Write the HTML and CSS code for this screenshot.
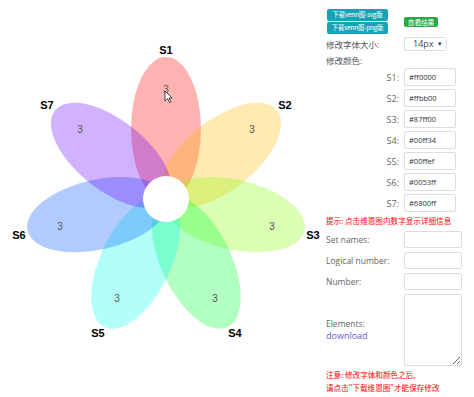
FILE: index.html
```html
<!DOCTYPE html>
<html lang="zh-CN">
<head>
  <meta charset="UTF-8" />
  <title>Venn</title>
  <link rel="stylesheet" href="styles.css">
</head>
<body>
  <div class="page">
    <!-- flower venn -->
    <svg class="venn" width="322" height="397" viewBox="0 0 322 397">
      <g class="petals">
        <ellipse cx="166" cy="129" rx="35" ry="72" fill="#ff0000" />
        <ellipse cx="166" cy="129" rx="35" ry="72" fill="#ffbb00" transform="rotate(51.43 166 199)" />
        <ellipse cx="166" cy="129" rx="35" ry="72" fill="#87ff00" transform="rotate(102.86 166 199)" />
        <ellipse cx="166" cy="129" rx="35" ry="72" fill="#00ff34" transform="rotate(154.29 166 199)" />
        <ellipse cx="166" cy="129" rx="35" ry="72" fill="#00ffef" transform="rotate(205.71 166 199)" />
        <ellipse cx="166" cy="129" rx="35" ry="72" fill="#0053ff" transform="rotate(257.14 166 199)" />
        <ellipse cx="166" cy="129" rx="35" ry="72" fill="#6800ff" transform="rotate(308.57 166 199)" />
      </g>
      <circle cx="166" cy="199" r="23" fill="#fff" />
      <g class="nums">
        <text x="166" y="93">3</text>
        <text x="252" y="133">3</text>
        <text x="272" y="230">3</text>
        <text x="215" y="302">3</text>
        <text x="117" y="302">3</text>
        <text x="60" y="230">3</text>
        <text x="80" y="133">3</text>
      </g>
      <g class="names">
        <text x="166" y="54">S1</text>
        <text x="285" y="109">S2</text>
        <text x="313" y="239">S3</text>
        <text x="235" y="337">S4</text>
        <text x="98" y="337">S5</text>
        <text x="19" y="239">S6</text>
        <text x="47" y="109">S7</text>
      </g>
      <path class="cursor" d="M165 91 L165 101 L167.5 98.5 L169.5 102.5 L171 101.8 L169 98 L172 98 Z" />
    </svg>

    <div class="panel">
      <div class="row top">
        <div class="dl">
          <button class="btn info">下载venn图-svg版</button>
          <button class="btn info">下载venn图-png版</button>
        </div>
        <button class="btn ok">查看结果</button>
      </div>

      <div class="row size">
        <span class="lbl">修改字体大小:</span>
        <div class="select">14px <span class="arrow">▾</span></div>
      </div>

      <div class="row head"><span class="lbl">修改颜色:</span></div>

      <div class="colors">
        <div class="crow"><span class="set">S1:</span><input type="text" value="#ff0000"></div>
        <div class="crow"><span class="set">S2:</span><input type="text" value="#ffbb00"></div>
        <div class="crow"><span class="set">S3:</span><input type="text" value="#87ff00"></div>
        <div class="crow"><span class="set">S4:</span><input type="text" value="#00ff34"></div>
        <div class="crow"><span class="set">S5:</span><input type="text" value="#00ffef"></div>
        <div class="crow"><span class="set">S6:</span><input type="text" value="#0053ff"></div>
        <div class="crow"><span class="set">S7:</span><input type="text" value="#6800ff"></div>
      </div>

      <p class="warn tip">提示: 点击维恩图内数字显示详细信息</p>

      <div class="info-rows">
        <div class="irow"><span class="lbl">Set names:</span><input type="text"></div>
        <div class="irow"><span class="lbl">Logical number:</span><input type="text"></div>
        <div class="irow"><span class="lbl">Number:</span><input type="text"></div>
        <div class="irow el">
          <span class="lbl">Elements:<br><a href="#">download</a></span>
          <textarea></textarea>
        </div>
      </div>

      <p class="warn note">注意: 修改字体和颜色之后,<br>请点击"下载维恩图"才能保存修改</p>
    </div>
  </div>
</body>
</html>
```

FILE: styles.css
```css
* { box-sizing: border-box; }
body {
  margin: 0;
  background: #fff;
  color: #555;
  font-family: "Open Sans", "Noto Sans CJK SC", sans-serif;
}
.page {
  display: flex;
  width: 474px;
  height: 397px;
  overflow: hidden;
}
.venn {
  flex: none;
  display: block;
  margin-right: 4px;
}
.petals ellipse { fill-opacity: 0.3; }
.nums text {
  font-family: "Liberation Sans", Arial, sans-serif;
  font-size: 10px;
  fill: #555;
  text-anchor: middle;
}
.names text {
  font-family: "Liberation Sans", Arial, sans-serif;
  font-size: 11px;
  font-weight: bold;
  fill: #000;
  text-anchor: middle;
}
.cursor {
  fill: #fff;
  stroke: #222;
  stroke-width: 0.8;
}

/* right panel */
.panel {
  width: 148px;
  padding-top: 9px;
  font-size: 8.5px;
}
.row {
  display: flex;
  align-items: center;
}
.lbl { width: 78px; flex: none; }
.dl {
  width: 78px;
  display: flex;
  flex-direction: column;
  align-items: flex-start;
  gap: 1px;
  padding-left: 1px;
}
.btn {
  border: none;
  border-radius: 2px;
  color: #fff;
  font-family: "Noto Sans CJK SC", sans-serif;
  font-size: 6.4px;
  line-height: 12px;
  height: 12px;
  padding: 0 2px;
  white-space: nowrap;
  letter-spacing: -0.2px;
}
.btn.info { background: #17a2b8; width: 61px; }
.btn.ok { background: #28a745; height: 10px; line-height: 10px; width: 34px; font-size: 6.8px; }

.size { margin-top: 3px; height: 14px; }
.select {
  width: 43px;
  height: 14px;
  border: 1px solid #ddd;
  border-radius: 2px;
  font-size: 9px;
  line-height: 12px;
  padding-left: 8px;
  color: #444;
  position: relative;
}
.arrow {
  position: absolute;
  right: 4px;
  top: 0;
  font-size: 7px;
  color: #333;
}
.head { margin-top: 3px; height: 12px; }

.colors {
  margin-top: 2px;
  display: flex;
  flex-direction: column;
  gap: 3px;
}
.crow {
  display: flex;
  align-items: center;
  height: 18px;
}
.set {
  width: 78px;
  text-align: right;
  padding-right: 5px;
  font-size: 9px;
  color: #666;
}
.crow input {
  width: 52px;
  height: 18px;
  border: 1px solid #ddd;
  border-radius: 2px;
  font-family: "Open Sans", sans-serif;
  font-size: 7.5px;
  color: #333;
  padding: 0 4px;
}

.warn {
  color: #f00;
  margin: 0;
  font-family: "Noto Sans CJK SC", sans-serif;
  font-size: 7.6px;
}
.tip { margin-top: 4px; line-height: 10px; }

.info-rows {
  margin-top: 5px;
  display: flex;
  flex-direction: column;
  gap: 4px;
}
.irow {
  display: flex;
  align-items: center;
  height: 17px;
}
.irow .lbl { font-size: 8.5px; color: #666; }
.irow input {
  width: 58px;
  height: 17px;
  border: 1px solid #ddd;
  border-radius: 2px;
}
.irow.el { height: 72px; }
.irow textarea {
  width: 58px;
  height: 72px;
  border: 1px solid #ddd;
  border-radius: 2px;
  resize: vertical;
}
.irow a { color: #6a5acd; text-decoration: none; font-size: 9px; }

.note {
  margin-top: 2px;
  line-height: 13px;
}
```
